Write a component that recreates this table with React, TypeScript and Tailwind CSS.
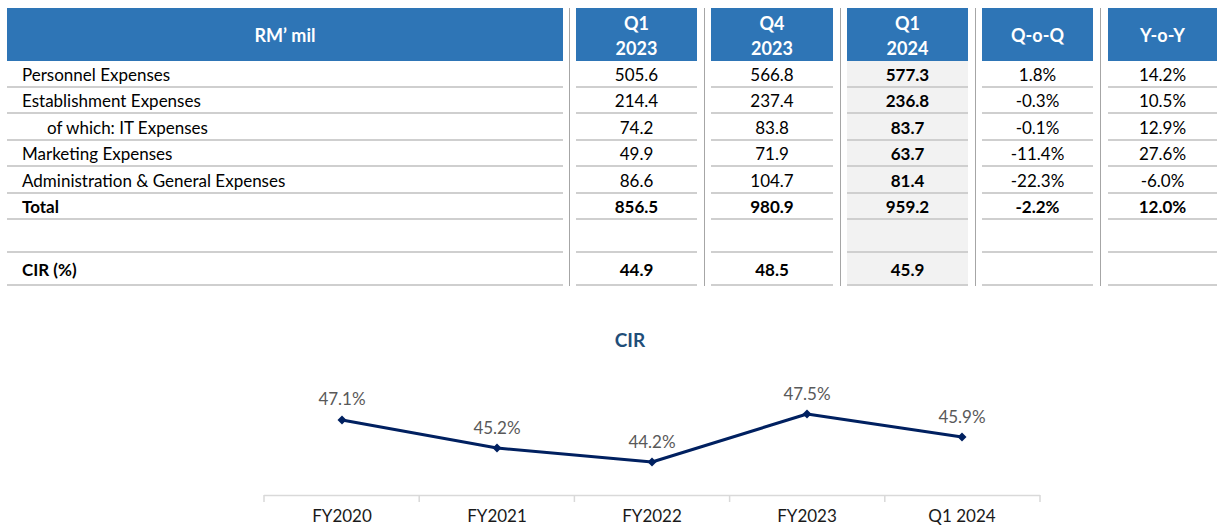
import React from "react";

type Row = { label: string; values: string[]; bold?: boolean; indent?: boolean; tall?: boolean };

const ROWS: Row[] = [
  { label: "Personnel Expenses", values: ["505.6", "566.8", "577.3", "1.8%", "14.2%"] },
  { label: "Establishment Expenses", values: ["214.4", "237.4", "236.8", "-0.3%", "10.5%"] },
  { label: "of which: IT Expenses", indent: true, values: ["74.2", "83.8", "83.7", "-0.1%", "12.9%"] },
  { label: "Marketing Expenses", values: ["49.9", "71.9", "63.7", "-11.4%", "27.6%"] },
  { label: "Administration & General Expenses", values: ["86.6", "104.7", "81.4", "-22.3%", "-6.0%"] },
  { label: "Total", bold: true, values: ["856.5", "980.9", "959.2", "-2.2%", "12.0%"] },
  { label: "", tall: true, values: ["", "", "", "", ""] },
  { label: "CIR (%)", bold: true, tall: true, values: ["44.9", "48.5", "45.9", "", ""] },
];

const COLS = [
  { head: ["Q1", "2023"], width: "w-[121px]" },
  { head: ["Q4", "2023"], width: "w-[122px]" },
  { head: ["Q1", "2024"], width: "w-[121px]", shaded: true },
  { head: ["Q-o-Q"], width: "w-[111px]" },
  { head: ["Y-o-Y"], width: "w-[109px]" },
];

const SEP_WIDTHS = ["w-[13px]", "w-[14px]", "w-[14px]", "w-[14px]", "w-[15px]"];

function Separator({ width }: { width: string }) {
  return (
    <div className={`${width} flex justify-center`}>
      <div className="w-px h-[278px] bg-[#a6a6a6]" />
    </div>
  );
}

function rowH(r: Row) {
  return r.tall ? "h-[33px]" : "h-[26.5px]";
}

function LabelColumn() {
  return (
    <div className="w-[556px] flex flex-col">
      <div className="h-[53px] bg-[#2e75b6] flex items-center justify-center pt-[2px] text-white font-bold text-[18px]">
        RM’ mil
      </div>
      {ROWS.map((r, i) => (
        <div
          key={i}
          className={`${rowH(r)} flex items-center pt-[2px] border-b-2 border-[#cfcfcf] text-[17px] text-black ${
            r.indent ? "pl-[40px]" : "pl-[15px]"
          } ${r.bold ? "font-bold" : ""}`}
        >
          {r.label}
        </div>
      ))}
    </div>
  );
}

function ValueColumn({ idx }: { idx: number }) {
  const col = COLS[idx];
  return (
    <div className={`${col.width} flex flex-col`}>
      <div className="h-[53px] bg-[#2e75b6] flex flex-col items-center justify-center pt-[2px] text-white font-bold text-[18px] leading-[25px]">
        {col.head.map((h) => (
          <span key={h}>{h}</span>
        ))}
      </div>
      {ROWS.map((r, i) => (
        <div
          key={i}
          className={`${rowH(r)} flex items-center justify-center pt-[2px] border-b-2 border-[#cfcfcf] text-[17px] text-black ${
            r.bold || col.shaded ? "font-bold" : ""
          } ${col.shaded ? "bg-[#f2f2f2]" : ""}`}
        >
          {r.values[idx]}
        </div>
      ))}
    </div>
  );
}

const POINTS = [
  { cat: "FY2020", v: "47.1%", x: 342, y: 120, ly: 105 },
  { cat: "FY2021", v: "45.2%", x: 497, y: 148, ly: 134 },
  { cat: "FY2022", v: "44.2%", x: 652, y: 162, ly: 148 },
  { cat: "FY2023", v: "47.5%", x: 807, y: 114, ly: 100 },
  { cat: "Q1 2024", v: "45.9%", x: 962, y: 137, ly: 123 },
];

function Chart() {
  const ticks = [264, 419.2, 574.4, 729.6, 884.8, 1040];
  return (
    <svg width={1227} height={227} className="block" style={{ fontFamily: "Lato, 'Open Sans', sans-serif" }}>
      <text x={630} y={47} textAnchor="middle" fontSize={19} fontWeight={700} fill="#1f4e79">
        CIR
      </text>
      <line x1={264} y1={195.5} x2={1040} y2={195.5} stroke="#d9d9d9" strokeWidth={1.5} />
      {ticks.map((t) => (
        <line key={t} x1={t} y1={195} x2={t} y2={202} stroke="#d9d9d9" strokeWidth={1.5} />
      ))}
      <polyline
        points={POINTS.map((p) => `${p.x},${p.y}`).join(" ")}
        fill="none"
        stroke="#002060"
        strokeWidth={3}
        strokeLinejoin="round"
      />
      {POINTS.map((p) => (
        <g key={p.cat}>
          <polygon
            points={`${p.x},${p.y - 4.5} ${p.x + 4.5},${p.y} ${p.x},${p.y + 4.5} ${p.x - 4.5},${p.y}`}
            fill="#002060"
          />
          <text x={p.x} y={p.ly} textAnchor="middle" fontSize={17} fill="#595959">
            {p.v}
          </text>
          <text x={p.x} y={222} textAnchor="middle" fontSize={17} fill="#1a1a1a">
            {p.cat}
          </text>
        </g>
      ))}
    </svg>
  );
}

export default function App() {
  return (
    <div className="w-[1227px] h-[527px] bg-white overflow-hidden" style={{ fontFamily: "Lato, 'Open Sans', sans-serif" }}>
      <div className="flex pt-[8px] pl-[7px]">
        <LabelColumn />
        {COLS.map((_, i) => (
          <React.Fragment key={i}>
            <Separator width={SEP_WIDTHS[i]} />
            <ValueColumn idx={i} />
          </React.Fragment>
        ))}
      </div>
      <div className="mt-[14px]">
        <Chart />
      </div>
    </div>
  );
}
